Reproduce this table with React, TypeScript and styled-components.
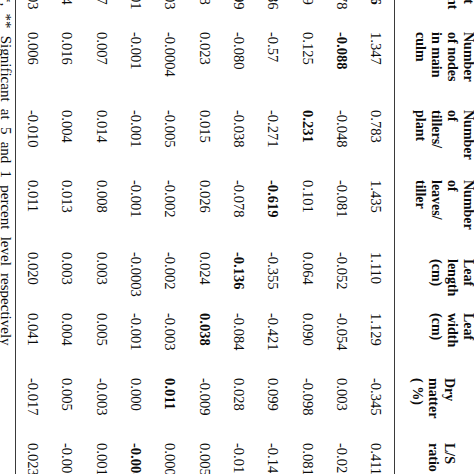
import React from 'react';
import styled, { createGlobalStyle } from 'styled-components';

// the page shows the table turned a quarter turn clockwise
const COLS = '92px 60px 78px 70px 72px 61px 65px 65px 77px';

const headers: { lines: string[]; drop?: number; indent?: number }[] = [
  { lines: ['Characters'] },
  { lines: ['Plant', 'height', '(cm)'] },
  { lines: ['Number', 'of nodes', 'in main', 'culm'] },
  { lines: ['Number', 'of', 'tillers/', 'plant'] },
  { lines: ['Number', 'of', 'leaves/', 'tiller'] },
  { lines: ['Leaf', 'length', '(cm)'], indent: 7 },
  { lines: ['Leaf', 'width', '(cm)'] },
  { lines: ['Dry', 'matter', '( %)'], drop: 19 },
  { lines: ['L/S', 'ratio'], drop: 19 },
];

const rows: { label: string; values: string[]; bold: number }[] = [
  { label: 'Plant height', values: ['0.936', '1.347', '0.783', '1.435', '1.110', '1.129', '-0.345', '0.411'], bold: 0 },
  { label: 'Nodes/culm', values: ['-0.078', '-0.088', '-0.048', '-0.081', '-0.052', '-0.054', '0.003', '-0.021'], bold: 1 },
  { label: 'Tillers/plant', values: ['0.109', '0.125', '0.231', '0.101', '0.064', '0.090', '-0.098', '0.081'], bold: 2 },
  { label: 'Leaves/tiller', values: ['-0.586', '-0.57', '-0.271', '-0.619', '-0.355', '-0.421', '0.099', '-0.142'], bold: 3 },
  { label: 'Leaf length', values: ['-0.099', '-0.080', '-0.038', '-0.078', '-0.136', '-0.084', '0.028', '-0.015'], bold: 4 },
  { label: 'Leaf width', values: ['0.018', '0.023', '0.015', '0.026', '0.024', '0.038', '-0.009', '0.005'], bold: 5 },
  { label: 'Dry matter', values: ['-0.003', '-0.0004', '-0.005', '-0.002', '-0.002', '-0.003', '0.011', '0.000'], bold: 6 },
  { label: 'L/S ratio', values: ['-0.001', '-0.001', '-0.001', '-0.001', '-0.0003', '-0.001', '0.000', '-0.008'], bold: 7 },
  { label: 'Crude protein', values: ['0.007', '0.007', '0.014', '0.008', '0.003', '0.005', '-0.003', '0.001'], bold: -1 },
  { label: 'Crude fibre', values: ['0.004', '0.016', '0.004', '0.013', '0.003', '0.004', '0.005', '-0.002'], bold: -1 },
  { label: 'Ash', values: ['-0.003', '0.006', '-0.010', '0.011', '0.020', '0.041', '-0.017', '0.023'], bold: -1 },
];

function App() {
  return (
    <>
      <GlobalStyle />
      <Viewport>
        <Sheet>
          <HeaderRow>
            {headers.map((h, i) => (
              <HeadCell key={i} $drop={h.drop ?? 0} $indent={h.indent ?? 0}>
                {h.lines.map((line) => (
                  <HeadLine key={line}>{line}</HeadLine>
                ))}
              </HeadCell>
            ))}
          </HeaderRow>

          <Body>
            {rows.map((r) => (
              <BodyRow key={r.label}>
                <Label>{r.label}</Label>
                {r.values.map((v, i) => (
                  <Cell key={i} $bold={i === r.bold}>
                    {v}
                  </Cell>
                ))}
              </BodyRow>
            ))}
          </Body>

          <Footnote>{'*, ** Significant at 5 and 1 percent level respectively'}</Footnote>
        </Sheet>
      </Viewport>
    </>
  );
}

const GlobalStyle = createGlobalStyle`
  html, body {
    margin: 0;
    padding: 0;
    background: #ffffff;
  }
  body {
    font-family: "Liberation Serif", "Times New Roman", serif;
    color: #000000;
  }
`;

const Viewport = styled.div`
  width: 474px;
  height: 474px;
  overflow: hidden;
  background: #ffffff;
`;

const Sheet = styled.div`
  width: 640px;
  transform-origin: 0 0;
  transform: translate(484px, -120px) rotate(90deg);
  font-family: "Liberation Serif", "Times New Roman", serif;
  color: #0a0a0a;
`;

const HeaderRow = styled.div`
  display: grid;
  grid-template-columns: ${COLS};
  align-items: start;
  box-sizing: border-box;
  height: 90px;
  padding-top: 8px;
  border-bottom: 1px solid #3a3a3a;
`;

const HeadCell = styled.div<{ $drop: number; $indent: number }>`
  padding-top: ${(p) => p.$drop}px;
  padding-left: ${(p) => p.$indent}px;
  font-size: 14px;
  font-weight: 700;
  line-height: 16px;
  white-space: nowrap;
`;

const HeadLine = styled.span`
  display: block;
`;

const Body = styled.div`
  padding-top: 1px;
  border-bottom: 1px solid #3a3a3a;
`;

const BodyRow = styled.div`
  display: grid;
  grid-template-columns: ${COLS};
  align-items: center;
  height: 34.3px;
  font-size: 14.5px;
  line-height: 1;
`;

const Label = styled.div`
  white-space: nowrap;
  overflow: hidden;
`;

const Cell = styled.div<{ $bold: boolean }>`
  white-space: nowrap;
  font-weight: ${(p) => (p.$bold ? 700 : 400)};
`;

const Footnote = styled.div`
  padding: 1px 0 0 115px;
  font-size: 15px;
  word-spacing: 3.5px;
  white-space: nowrap;
`;

export default App;
